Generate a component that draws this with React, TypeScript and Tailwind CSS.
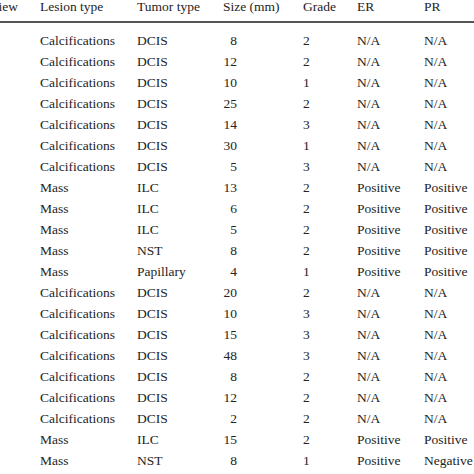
const rows: [string, string, string, string, string, string][] = [
  ["Calcifications", "DCIS", "8", "2", "N/A", "N/A"],
  ["Calcifications", "DCIS", "12", "2", "N/A", "N/A"],
  ["Calcifications", "DCIS", "10", "1", "N/A", "N/A"],
  ["Calcifications", "DCIS", "25", "2", "N/A", "N/A"],
  ["Calcifications", "DCIS", "14", "3", "N/A", "N/A"],
  ["Calcifications", "DCIS", "30", "1", "N/A", "N/A"],
  ["Calcifications", "DCIS", "5", "3", "N/A", "N/A"],
  ["Mass", "ILC", "13", "2", "Positive", "Positive"],
  ["Mass", "ILC", "6", "2", "Positive", "Positive"],
  ["Mass", "ILC", "5", "2", "Positive", "Positive"],
  ["Mass", "NST", "8", "2", "Positive", "Positive"],
  ["Mass", "Papillary", "4", "1", "Positive", "Positive"],
  ["Calcifications", "DCIS", "20", "2", "N/A", "N/A"],
  ["Calcifications", "DCIS", "10", "3", "N/A", "N/A"],
  ["Calcifications", "DCIS", "15", "3", "N/A", "N/A"],
  ["Calcifications", "DCIS", "48", "3", "N/A", "N/A"],
  ["Calcifications", "DCIS", "8", "2", "N/A", "N/A"],
  ["Calcifications", "DCIS", "12", "2", "N/A", "N/A"],
  ["Calcifications", "DCIS", "2", "2", "N/A", "N/A"],
  ["Mass", "ILC", "15", "2", "Positive", "Positive"],
  ["Mass", "NST", "8", "1", "Positive", "Negative"],
];

const cols = "grid grid-cols-[40px_97px_86px_80px_54px_67px_1fr] whitespace-nowrap";

export default function App() {
  return (
    <div className="w-[474px] h-[474px] overflow-hidden bg-white text-[#242424] text-[13.5px] font-[family-name:'Liberation_Serif',serif]">
      {/* Header */}
      <div className={`${cols} leading-[13px] pb-[8px]`}>
        <div className="flex justify-end pr-[22px]">View</div>
        <div>Lesion type</div>
        <div>Tumor type</div>
        <div>Size (mm)</div>
        <div>Grade</div>
        <div>ER</div>
        <div>PR</div>
      </div>
      <div className="h-[1.5px] bg-[#555]" />

      {/* Body */}
      <div className="pt-[7.5px] leading-[21px]">
        {rows.map((r, i) => (
          <div key={i} className={cols}>
            <div />
            <div>{r[0]}</div>
            <div>{r[1]}</div>
            <div>
              <div className="w-[14px] flex justify-end">{r[2]}</div>
            </div>
            <div>{r[3]}</div>
            <div>{r[4]}</div>
            <div>{r[5]}</div>
          </div>
        ))}
      </div>
    </div>
  );
}
